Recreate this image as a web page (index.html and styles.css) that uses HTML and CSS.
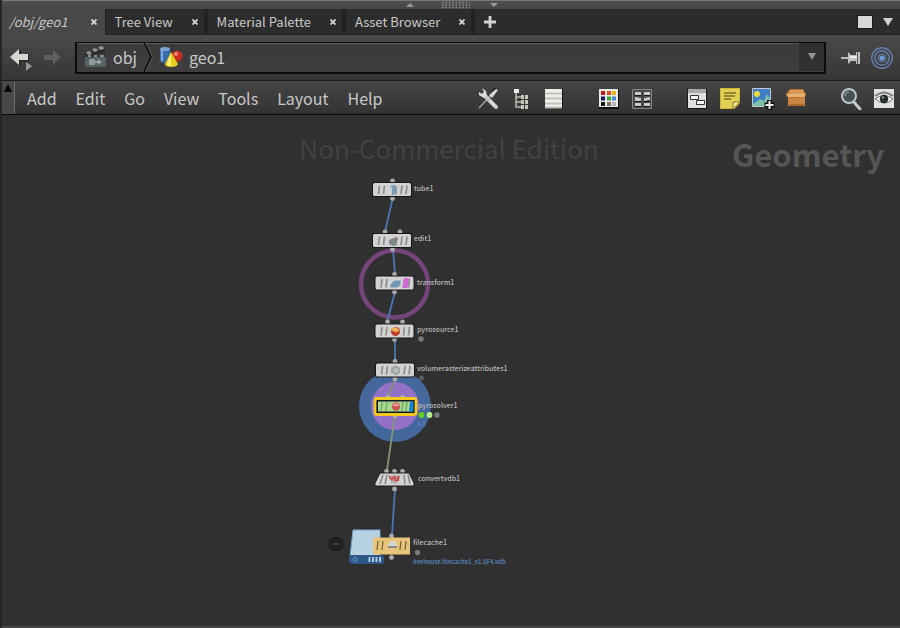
FILE: index.html
```html
<!DOCTYPE html>
<html lang="en">
<head>
<meta charset="utf-8">
<title>/obj/geo1</title>
<link rel="stylesheet" href="styles.css">
</head>
<body>
<div class="splitter">
  <svg width="98" height="9" viewBox="0 0 98 9" aria-hidden="true">
    <path d="M4 7l4-4 4 4z" fill="#999"/>
    <path d="M88 3h8l-4 4z" fill="#999"/>
    <path d="M40 2.500h28M40 5h28M40 7.500h28" stroke="#909090" stroke-width="1.300" stroke-dasharray="1.500 1.900"/>
  </svg>
</div>

<nav class="tabs">
  <div class="tab tab-active"><a href="#">/obj/geo1</a><button class="close" aria-label="Close /obj/geo1"><svg width="6" height="6" viewBox="0 0 6 6"><path d="M.5.5l5 5M5.500.5l-5 5" stroke="#d6d6d6" stroke-width="1.800"/></svg></button></div>
  <div class="tab"><a href="#">Tree View</a><button class="close" aria-label="Close Tree View"><svg width="6" height="6" viewBox="0 0 6 6"><path d="M.5.5l5 5M5.500.5l-5 5" stroke="#d6d6d6" stroke-width="1.800"/></svg></button></div>
  <div class="tab"><a href="#">Material Palette</a><button class="close" aria-label="Close Material Palette"><svg width="6" height="6" viewBox="0 0 6 6"><path d="M.5.5l5 5M5.500.5l-5 5" stroke="#d6d6d6" stroke-width="1.800"/></svg></button></div>
  <div class="tab"><a href="#">Asset Browser</a><button class="close" aria-label="Close Asset Browser"><svg width="6" height="6" viewBox="0 0 6 6"><path d="M.5.5l5 5M5.500.5l-5 5" stroke="#d6d6d6" stroke-width="1.800"/></svg></button></div>
  <button class="add-tab" aria-label="New tab"><svg width="14" height="14" viewBox="0 0 14 14"><path d="M7 1v12M1 7h12" stroke="#d2d2d2" stroke-width="2.800"/></svg></button>
  <div class="tab-tools">
    <button aria-label="Maximize pane"><svg width="16" height="14" viewBox="0 0 16 14"><path d="M0 0h16v14H0z" fill="#161c1e"/><path d="M1 1h14v12H1z" fill="#d6d8d6"/></svg></button>
    <button aria-label="Pane menu"><svg width="10" height="8" viewBox="0 0 10 8"><path d="M0 0h10L5 8z" fill="#d2d2d2"/></svg></button>
  </div>
</nav>

<div class="path-row">
  <button aria-label="Back"><svg width="24" height="26" viewBox="0 0 24 26"><path d="M2 12l10-8v5h8v8h-8v5z" fill="#181818" opacity=".5"/><path d="M1 12l9-8v5h9v6h-9v5z" fill="#d4d6d0"/><path d="M17 17l6 4-6 5z" fill="#999"/></svg></button>
  <button aria-label="Forward"><svg width="24" height="26" viewBox="0 0 24 26"><path d="M20 12l-8-7v5H3v5h9v5z" fill="#5d5f5d"/></svg></button>
  <div class="path">
    <button class="crumb"><svg width="24" height="24" viewBox="0 0 24 24"><path d="M2 10h21v12H2z" fill="#566164"/><path d="M2 9l20-6v4L3 11z" fill="#252828"/><path d="M3 7l4-1 2 3-4 1zM9 4l4-1 2 3-4 1zM15 2l5-1 1 3-4 1z" fill="#8f9593"/><path d="M2 10h21v2H2z" fill="#303536"/><path d="M5 11h3M11 11h3M17 11h4" stroke="#a5aaa8" stroke-width="1.500"/><path d="M6 14h6v6H6z" fill="#8e9999"/><path d="M11 16h4v-2l4 3-4 3v-2h-4z" fill="#9ba5a5"/></svg><span>obj</span></button>
    <svg class="chevron" width="10" height="30" viewBox="0 0 10 30"><path d="M1 0l7 15-7 15" fill="none" stroke="#080808" stroke-width="1.500"/><path d="M2.500 0l7 15-7 15" fill="none" stroke="#666" stroke-width=".7"/></svg>
    <button class="crumb"><svg width="24" height="22" viewBox="0 0 24 22"><path d="M1 3v11q0 3 5 3t5-3V3z" fill="#3a6bad"/><path d="M3 4v11" stroke="#83acdc" stroke-width="2"/><ellipse cx="6" cy="3" rx="5" ry="2" fill="#7ba2d0"/><circle cx="18" cy="10" r="5.500" fill="#c82f20"/><circle cx="17" cy="8" r="2" fill="#ee8a70"/><path d="M12 6l7 12q-1 3-7 3t-6-3z" fill="#e8ce20"/><path d="M12 7l-4 11q1 2 4 2z" fill="#fff377"/></svg><span>geo1</span></button>
    <button class="path-menu" aria-label="Path history"><svg width="10" height="8" viewBox="0 0 10 8"><path d="M1 0h8L5 7z" fill="#929292"/></svg></button>
  </div>
  <button aria-label="Pin"><svg width="22" height="18" viewBox="0 0 22 18"><path d="M1 9h8" stroke="#b9bdbb" stroke-width="2"/><path d="M8 3l3 3h5V3h4v12h-4v-3h-5l-3 3z" fill="#bfc2c0"/><path d="M17.500 3v12" stroke="#555" stroke-width="1"/><path d="M10 8h7" stroke="#eee" stroke-width="2"/></svg></button>
  <button aria-label="Link group"><svg width="24" height="24" viewBox="0 0 24 24" fill="none" stroke="#647fab"><circle cx="12" cy="12" r="10.300" stroke-width="1.400"/><circle cx="12" cy="12" r="7.200" stroke-width="1.500"/><circle cx="12" cy="12" r="4" stroke-width="1"/><circle cx="12" cy="12" r="2.600" fill="#719be0" stroke="none"/></svg></button>
</div>

<div class="menubar">
  <button class="grip" aria-label="Hide menu"><svg width="8" height="8" viewBox="0 0 8 8"><path d="M4 0l4 8H0z" fill="#050505"/></svg></button>
  <nav class="menus">
    <button>Add</button><button>Edit</button><button>Go</button><button>View</button><button>Tools</button><button>Layout</button><button>Help</button>
  </nav>
  <div class="tools">
    <div class="group">
      <button aria-label="Tools"><svg width="24" height="24" viewBox="0 0 24 24"><path d="M20 3L3 22" stroke="#111" stroke-width="3"/><path d="M3 22L15 9" stroke="#8e9290" stroke-width="2"/><path d="M13 9l7-6 2 1-6 8z" fill="#d9dbd9"/><path d="M8 9l12 12" stroke="#c5c8c6" stroke-width="4" stroke-linecap="round"/><path d="M6 2l4 3 1 5-3 2-5-3V6l3 2 2-2z" fill="#d9dbd9"/><path d="M14 15l5 5" stroke="#eee" stroke-width="1.500"/></svg></button>
      <button aria-label="Tree"><svg width="24" height="24" viewBox="0 0 24 24"><path d="M5 3h5v4H5z" fill="#f0f1ee"/><path d="M7 7v14h7M7 11h7M7 16h7" fill="none" stroke="#b9beb0" stroke-width="1.500"/><path d="M12 9h3v4h-3zM12 14h3v4h-3zM12 19h3v4h-3zM16 9h3v4h-3zM16 14h3v4h-3zM16 19h3v4h-3z" fill="#c5c9bc"/></svg></button>
      <button aria-label="List"><svg width="24" height="24" viewBox="0 0 24 24"><path d="M3 3h18v20H3z" fill="#151515"/><path d="M3 3h17v19H3z" fill="#eef0eb"/><path d="M3 7.500h17M3 12.500h17M3 17.500h17M3 21.500h17" stroke="#c0c4bb" stroke-width="2"/></svg></button>
    </div>
    <div class="group">
      <button aria-label="Color palette"><svg width="24" height="24" viewBox="0 0 24 24"><path d="M2 3h20v20H2z" fill="#111"/><path d="M2 3h19v18H2z" fill="#e9e9e9"/><path d="M4 5h4v4H4z" fill="#c01818"/><path d="M10 5h4v4h-4z" fill="#e04c1c"/><path d="M15 5h4v4h-4z" fill="#e0bc20"/><path d="M4 10.500h4v4H4z" fill="#181860"/><path d="M10 10.500h4v4h-4z" fill="#38a838"/><path d="M15 10.500h4v4h-4z" fill="#4e86d0"/><path d="M4 16h4v4H4z" fill="#181818"/><path d="M10 16h4v4h-4z" fill="#806f60"/><path d="M15 16h4v4h-4z" fill="#b5b5b5"/></svg></button>
      <button aria-label="Shape palette"><svg width="24" height="24" viewBox="0 0 24 24"><path d="M2.500 3.500h19v19h-19z" fill="#484848" stroke="#858585"/><path d="M5 6h6v3H5zM14 6h6v3h-6zM5 11l6 1v3H5zM14 12l6-1v3l-6 1zM5 17h6v3H5zM14 17h6v3h-6z" fill="#c9c9c9"/><path d="M5 9.500h6M14 9.500h6M5 15.500h6M14 15.500h6M5 20.500h6M14 20.500h6" stroke="#151515"/></svg></button>
    </div>
    <div class="group">
      <button aria-label="Network box"><svg width="24" height="24" viewBox="0 0 24 24"><path d="M2 3h20v20H2z" fill="#161616"/><path d="M3 3h18v19H3z" fill="#dfe0df"/><path d="M3 3h18v4H3z" fill="#a8aaa8"/><path d="M5.500 9.500h8v4h-8zM11.500 14.500h8v4h-8z" fill="#f4f4f4" stroke="#333"/></svg></button>
      <button aria-label="Sticky note"><svg width="24" height="24" viewBox="0 0 24 24"><path d="M2 2h20v15l-6 6H2z" fill="#e4d052"/><path d="M2.500 2.500h19V17l-5 5.500h-14z" fill="none" stroke="#cdb533"/><path d="M22 16l-7 7v-7z" fill="#f7ec98" stroke="#8c7820"/><path d="M6 7h12M6 10h11M6 13h7" stroke="#7a6d29" stroke-width="1.300"/></svg></button>
      <button aria-label="Background image"><svg width="24" height="24" viewBox="0 0 24 24"><path d="M1.500 2.500h18v18h-18z" fill="#3f80c8" stroke="#c6cbd0"/><circle cx="6" cy="8" r="3" fill="#edd83b"/><path d="M2 18l7-5 4 2 3-7 3 5v7H2z" fill="#80bcab"/><path d="M18.500 14v10M13.500 19h10" stroke="#111" stroke-width="5"/><path d="M18.500 15v8M14.500 19h8" stroke="#f0f0f0" stroke-width="2"/></svg></button>
      <button aria-label="Asset bundle"><svg width="24" height="24" viewBox="0 0 24 24"><path d="M4 10h17v10H4z" fill="#c98543"/><path d="M6 3h13l3 5-2 4H4L2 8z" fill="#bd7432"/><path d="M6 4h13l1 4H5z" fill="#d79a58"/><path d="M2 8h20l-2 3H4z" fill="#e4b373"/><path d="M5 19h15" stroke="#a16126" stroke-width="1.500"/></svg></button>
    </div>
    <div class="group">
      <button aria-label="Find"><svg width="24" height="24" viewBox="0 0 24 24"><path d="M14 15l7 8" stroke="#c9cbc9" stroke-width="3" stroke-linecap="round"/><circle cx="10" cy="10" r="7" fill="#465157" stroke="#bfc4c4" stroke-width="2"/><path d="M6 10q0-4 4-4" fill="none" stroke="#81908f" stroke-width="1.500"/></svg></button>
      <button aria-label="Display options"><svg width="24" height="24" viewBox="0 0 24 24"><path d="M2 3h20v19H2z" fill="#e1e3e2"/><path d="M3 13q9-7 18 0-8 8-18 0z" fill="#fafafa" stroke="#676c6c"/><path d="M3 10q9-7 18 0" fill="none" stroke="#777d7d" stroke-width="1.800"/><circle cx="12" cy="13" r="4.300" fill="#252d2d"/><circle cx="11" cy="11.500" r="1" fill="#b7bcbc"/></svg></button>
    </div>
  </div>
</div>

<main class="network">
  <h1 class="context">Geometry</h1>
  <p class="edition">Non-Commercial Edition</p>
  <svg class="graph" width="900" height="511" viewBox="0 115 900 511">
    <defs>
      <g id="slats" fill="none" stroke="#8a8d89" stroke-width="1.700"><path d="M6.500 2.500l-1 8.500M11.500 2.500l-1 8.500M29 2.500l-1 8.500M34 2.500l-1 8.500"/></g>
      <g id="body"><rect x="-1" y="-1" width="40" height="15" rx="2" fill="#171717"/><rect width="38" height="13" rx="1.500" fill="#d2d2d2"/><use href="#slats"/></g>
    </defs>
    <circle cx="394.500" cy="284" r="33.500" fill="none" stroke="#75457a" stroke-width="4.500"/>
    <circle cx="395" cy="406" r="36" fill="#44679c"/>
    <circle cx="395" cy="406" r="24" fill="#9271c6"/>
    <g fill="none" stroke="#4776b2" stroke-width="1.800">
      <path d="M392.500 199L385 232M393 250l2 24M395 292l-8 30M395 340v21M395 489l-3 46"/>
      <path d="M395 380l-8 18M395 415l-8 55" stroke="#819574"/>
    </g>
    <g fill="#aaa">
      <circle cx="392.500" cy="181" r="2.400"/><circle cx="392.500" cy="198.500" r="2.400"/>
      <circle cx="385" cy="232" r="2.400"/><circle cx="400" cy="232" r="2.400"/><circle cx="392.500" cy="249.500" r="2.400"/>
      <circle cx="394.500" cy="274.500" r="2.400"/><circle cx="394.500" cy="292" r="2.400"/>
      <circle cx="387.500" cy="322" r="2.400"/><circle cx="402.500" cy="322" r="2.400"/><circle cx="394.500" cy="339.500" r="2.400"/>
      <circle cx="395" cy="361.500" r="2.400"/><circle cx="395" cy="379" r="2.400"/>
      <circle cx="388" cy="397" r="2.400"/><circle cx="402.500" cy="397" r="2.400"/><circle cx="395" cy="416" r="2.400"/>
      <circle cx="386.500" cy="471.500" r="2.400"/><circle cx="394.500" cy="471.500" r="2.400"/><circle cx="402.500" cy="471.500" r="2.400"/><circle cx="394.500" cy="489" r="2.400"/>
      <circle cx="391.500" cy="536" r="2.400"/><circle cx="391.500" cy="557.500" r="2.400"/>
    </g>
    <g transform="translate(373 183)"><use href="#body"/><path d="M17 3l5-1 2 2v7l-5 1-2-2z" fill="#7d9caf"/><path d="M18 4v7" stroke="#c2d6e1" stroke-width="2"/></g>
    <g transform="translate(373 234)"><use href="#body"/><path d="M16 6l4-2 4 3v4l-4 1-4-2z" fill="#7d898c"/><circle cx="23" cy="5" r="2" fill="#8e7d70"/></g>
    <g transform="translate(375.500 276.500)"><use href="#body"/><path d="M28.500 1.500h5l-1.500 10h-5z" fill="#d568d8"/><path d="M15 8l4-4h6v5l-4 2h-6z" fill="#7195b5"/></g>
    <g transform="translate(375.500 324.500)"><use href="#body"/><circle cx="20" cy="7" r="4.500" fill="#bb4030"/><path d="M15 5q5-5 9 1l-4 2z" fill="#f0b15a"/></g>
    <g transform="translate(376 363.500)"><use href="#body"/><path d="M15 4l5-2 4 2v5l-4 3-5-3z" fill="#9da4a3"/><circle cx="20" cy="7" r="2.500" fill="#b9bfbd"/></g>
    <rect x="375" y="398.500" width="41" height="16" rx="2" fill="#101820" stroke="#f4c91d" stroke-width="2.800"/>
    <rect x="378" y="401.500" width="35" height="10" fill="#a9d98f"/>
    <path d="M410 401.500h3.500v10h-4.500z" fill="#1384d0"/><path d="M382 402l-1 9M387 402l-1 9M403 402l-1 9M407 402l-1 9" stroke="#6ea66a" stroke-width="1.300"/>
    <circle cx="396" cy="406.500" r="4.200" fill="#cb5550"/><path d="M392 406q4-6 8 0z" fill="#ed9b94"/>
    <path d="M380 473h29l5 10v3h-39v-3z" fill="#d2d2d2" stroke="#1c1c1c"/>
    <path d="M383 475l-3 9M387 475l-2 9M404 475l1 9M408 475l2 9" stroke="#80847f" stroke-width="1.400"/>
    <path d="M389 475h11l-2 9h-7z" fill="#bbb"/><path d="M389 476l3 4 2-4M395 476v5q4-1 2-4M399 476l-1 5" fill="none" stroke="#c74b49" stroke-width="1.600"/>
    <circle cx="336" cy="544" r="7.500" fill="#202020"/><path d="M332.500 544h7" stroke="#51605b"/>
    <path d="M353 530h27v27h-30z" fill="#b7d2e3" stroke="#78a9cf"/><path d="M349 555h33q2 0 2 3v3q0 3-3 3h-28q-4 0-4-3z" fill="#2e5886"/>
    <circle cx="355" cy="559.500" r="2" fill="none" stroke="#6396c7"/><path d="M369.500 557v5M373 557v5M376.500 557v5M380 557v5" stroke="#a9c9e6" stroke-width="2"/>
    <path d="M374 537.500h36v17h-35q-2 0-2-3v-11q0-3 1-3z" fill="#e8c47a"/>
    <path d="M378 541l-1 9M383 541l-1 9M401 541l-1 9M406 541l-1 9" stroke="#77643f" stroke-width="1.300"/>
    <path d="M388 546l2-5h5l2 5v2h-9z" fill="#d5d6d5"/><path d="M388 547h9" stroke="#858a8e" stroke-width="2"/>
    <g fill="#737c7a"><circle cx="421" cy="339" r="2.700"/><circle cx="421.500" cy="378" r="2.500" fill="#55635f"/><circle cx="421.500" cy="415" r="2.900" fill="#62d018"/><circle cx="429.500" cy="415" r="2.900" fill="#b4ef8b"/><circle cx="437" cy="415" r="2.700"/><circle cx="417.500" cy="552.500" r="2.700"/></g>
    <g class="labels">
      <text x="414" y="191">tube1</text><text x="414" y="241">edit1</text><text x="417" y="285">transform1</text><text x="417" y="332">pyrosource1</text><text x="417" y="371">volumerasterizeattributes1</text><text x="418" y="408">pyrosolver1</text><text x="418" y="481">convertvdb1</text><text x="413" y="545">filecache1</text>
      <text class="info" x="417" y="426">1:1</text><text class="info" x="413" y="564">livehouse.filecache1_v1.$F4.vdb</text>
    </g>
  </svg>
</main>
</body>
</html>
```
FILE: styles.css
```css
* { box-sizing: border-box; }
body { margin: 0; min-height: 100vh; display: flex; flex-direction: column; background: #303030; color: #c8c8c8; font-family: "Noto Sans CJK JP", "Noto Sans", sans-serif; border-left: 2px solid #262626; }
button { padding: 0; border: 0; background: none; color: inherit; font: inherit; display: flex; align-items: center; justify-content: center; }
a { color: inherit; text-decoration: none; }
svg { display: block; flex: none; }

.splitter { height: 9px; display: flex; justify-content: center; background: linear-gradient(#777 0, #777 1px, #505050 1px, #464646); }

.tabs { height: 26px; display: flex; background: #2c2c2c; font-size: 13px; line-height: 26px; border-bottom: 1px solid #222; }
.tab { display: flex; align-items: center; justify-content: space-between; gap: 17px; padding: 0 4px 0 9px; border-right: 4px solid #222; }
.tab-active { background: #484848; font-style: italic; gap: 21px; padding: 0 6px 0 7px; margin-bottom: -1px; border-right-width: 1px; }
.close { width: 10px; height: 16px; }
.add-tab { width: 30px; }
.tab-tools { margin-left: auto; display: flex; align-items: center; gap: 10px; padding-right: 7px; }

.path-row { height: 45px; display: flex; align-items: center; gap: 8px; padding: 0 6px 0 7px; background: linear-gradient(#4a4a4a, #363636); }
.path { flex: 1; height: 32px; margin: 0 6px 0 2px; display: flex; align-items: center; border: 2px solid #0c0c0c; border-top-width: 1px; background: linear-gradient(#5a5a5a 0, #5a5a5a 1px, #3a3a3a 1px, #3e3e3e); font-size: 16px; }
.crumb { gap: 6px; padding: 0 6px; }
.path-menu { margin-left: auto; width: 25px; height: 28px; background: #303030; }

.menubar { height: 35px; display: flex; align-items: center; border-top: 1px solid #1c1c1c; border-bottom: 1px solid #080808; background: linear-gradient(#505050 0, #444 1px, #333); padding-right: 4px; }
.grip { align-self: stretch; width: 13px; align-items: flex-start; padding-top: 3px; background: #484848; border-right: 1px solid #6a6a6a; }
.menus { display: flex; gap: 19px; padding-left: 12px; font-size: 16px; line-height: 32px; }
.tools { margin-left: auto; display: flex; gap: 31px; }
.group { display: flex; gap: 9px; }

.network { flex: 1; position: relative; overflow: hidden; background: #303030; border-bottom: 2px solid #454545; }
.graph { margin-left: -2px; }
.edition, .context { position: absolute; margin: 0; }
.edition { top: 12px; left: 0; right: 4px; text-align: center; font-size: 26px; line-height: 42px; font-weight: 400; color: #424242; }
.context { top: 16px; right: 16px; font-size: 31px; line-height: 46px; font-weight: 700; color: #555; }
.labels { font-size: 7px; font-weight: 500; fill: #b9b9b9; }
.info { fill: #5b8fc6; font-size: 6px; }
```
